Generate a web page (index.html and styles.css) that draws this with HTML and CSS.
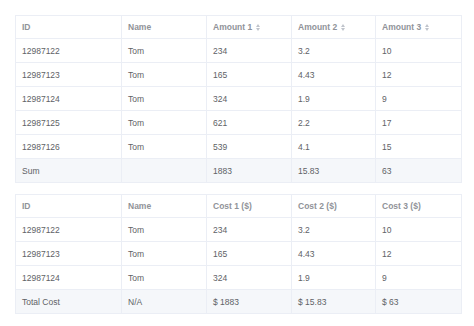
FILE: index.html
```html
<!DOCTYPE html>
<html>
<head>
<meta charset="utf-8">
<link rel="stylesheet" href="styles.css">
</head>
<body>
<div class="page">
  <table class="tbl">
    <colgroup><col class="c1"><col class="c2"><col class="c3"><col class="c4"><col class="c5"></colgroup>
    <thead>
      <tr>
        <th>ID</th><th>Name</th>
        <th><span class="sortable">Amount 1 <span class="caret"><i class="up"></i><i class="down"></i></span></span></th>
        <th><span class="sortable">Amount 2 <span class="caret"><i class="up"></i><i class="down"></i></span></span></th>
        <th><span class="sortable">Amount 3 <span class="caret"><i class="up"></i><i class="down"></i></span></span></th>
      </tr>
    </thead>
    <tbody>
      <tr><td>12987122</td><td>Tom</td><td>234</td><td>3.2</td><td>10</td></tr>
      <tr><td>12987123</td><td>Tom</td><td>165</td><td>4.43</td><td>12</td></tr>
      <tr><td>12987124</td><td>Tom</td><td>324</td><td>1.9</td><td>9</td></tr>
      <tr><td>12987125</td><td>Tom</td><td>621</td><td>2.2</td><td>17</td></tr>
      <tr><td>12987126</td><td>Tom</td><td>539</td><td>4.1</td><td>15</td></tr>
    </tbody>
    <tfoot>
      <tr><td>Sum</td><td></td><td>1883</td><td>15.83</td><td>63</td></tr>
    </tfoot>
  </table>

  <table class="tbl">
    <colgroup><col class="c1"><col class="c2"><col class="c3"><col class="c4"><col class="c5"></colgroup>
    <thead>
      <tr><th>ID</th><th>Name</th><th>Cost 1 ($)</th><th>Cost 2 ($)</th><th>Cost 3 ($)</th></tr>
    </thead>
    <tbody>
      <tr><td>12987122</td><td>Tom</td><td>234</td><td>3.2</td><td>10</td></tr>
      <tr><td>12987123</td><td>Tom</td><td>165</td><td>4.43</td><td>12</td></tr>
      <tr><td>12987124</td><td>Tom</td><td>324</td><td>1.9</td><td>9</td></tr>
    </tbody>
    <tfoot>
      <tr><td>Total Cost</td><td>N/A</td><td>$ 1883</td><td>$ 15.83</td><td>$ 63</td></tr>
    </tfoot>
  </table>
</div>
</body>
</html>
```

FILE: styles.css
```css
html, body {
  margin: 0;
  padding: 0;
  background: #ffffff;
}
.page {
  padding: 15px 0 0 15px;
  display: flex;
  flex-direction: column;
  gap: 11px;
  font-family: "Liberation Sans", Arial, sans-serif;
  font-size: 8.5px;
  color: #606266;
}
.tbl {
  width: 446px;
  border-collapse: collapse;
  table-layout: fixed;
  border: 1px solid #ebeef5;
}
.c1 { width: 106px; }
.c2 { width: 85px; }
.c3 { width: 85px; }
.c4 { width: 84px; }
.c5 { width: 86px; }
.tbl th, .tbl td {
  border: 1px solid #ebeef5;
  text-align: left;
  padding: 0 0 0 6px;
  white-space: nowrap;
  overflow: hidden;
  box-sizing: border-box;
  line-height: 10px;
}
.tbl th {
  height: 23px;
  color: #909399;
  font-weight: bold;
}
.tbl td {
  height: 24px;
}
.tbl tfoot td {
  background: #f5f7fa;
}
.sortable {
  display: inline-flex;
  align-items: center;
}
.caret {
  display: inline-flex;
  flex-direction: column;
  gap: 1px;
  margin-left: 4px;
}
.caret i {
  display: block;
  width: 0;
  height: 0;
  border-left: 2.5px solid transparent;
  border-right: 2.5px solid transparent;
}
.caret .up { border-bottom: 3px solid #c0c4cc; }
.caret .down { border-top: 3px solid #c0c4cc; }
```
